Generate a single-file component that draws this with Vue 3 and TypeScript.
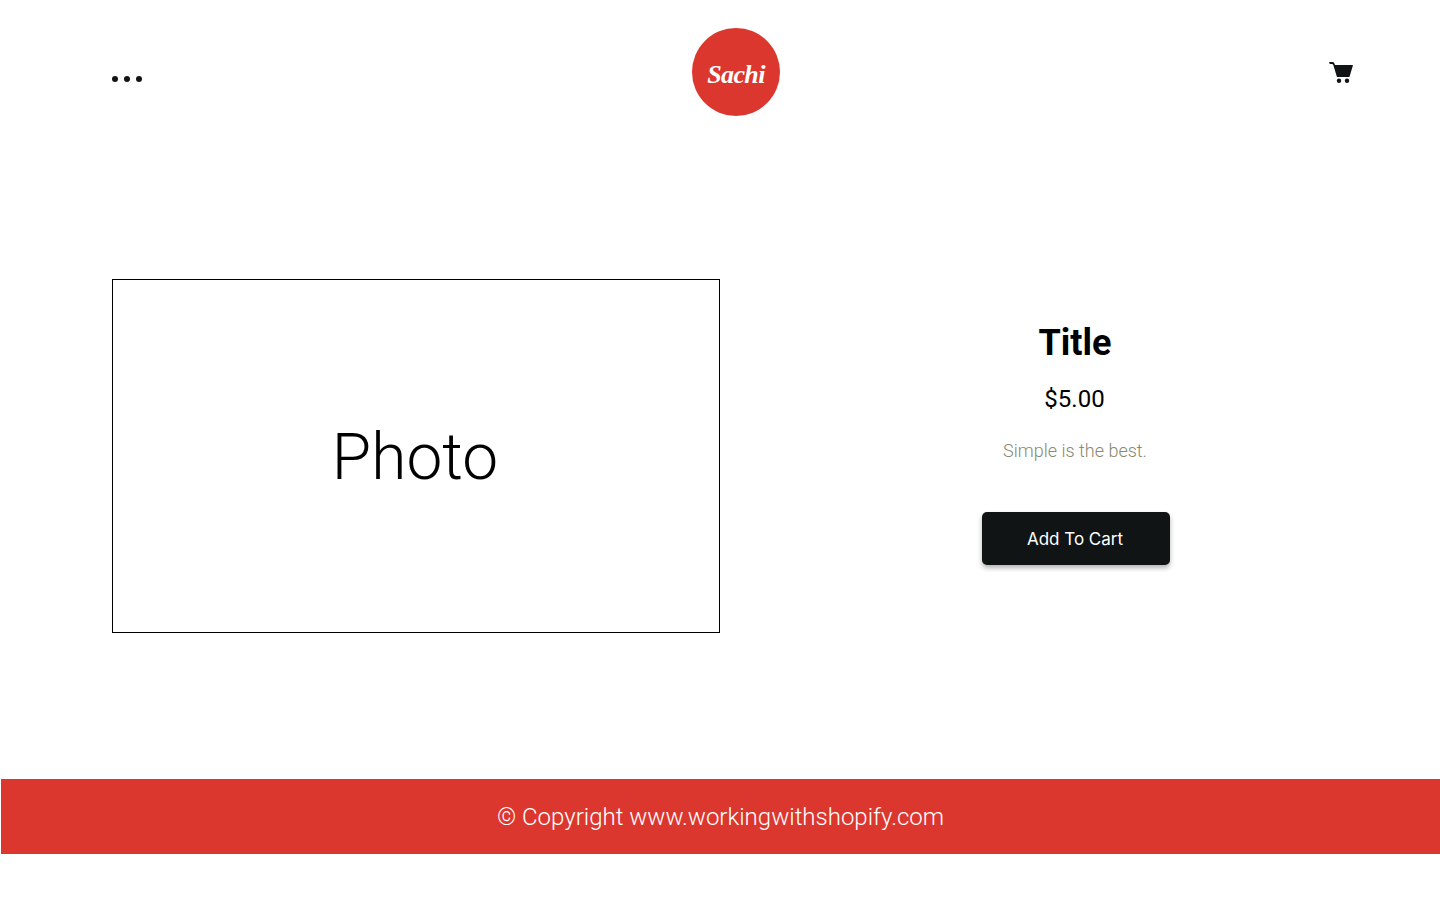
<script setup lang="ts">
const product = {
  title: 'Title',
  price: '$5.00',
  description: 'Simple is the best.'
}
</script>

<template>
  <div class="page">
    <header class="header">
      <button class="menu" aria-label="Menu">
        <span class="dot"></span>
        <span class="dot"></span>
        <span class="dot"></span>
      </button>
      <div class="logo"><span>Sachi</span></div>
      <a class="cart" href="#" aria-label="Cart">
        <svg width="24" height="22" viewBox="0 0 24 22">
          <path d="M0 1h3.6c.8 0 1.3.4 1.6 1.1L6 4h17.6c.3 0 .4.2.3.5l-3.3 10.9c-.1.4-.4.6-.8.6H8.6c-.4 0-.7-.2-.8-.6L4.3 4.1C4 3.2 3.5 2.9 2.8 2.9H.8z" fill="#111414" />
          <circle cx="10" cy="19.7" r="2.2" fill="#111414" />
          <circle cx="18" cy="19.7" r="2.2" fill="#111414" />
        </svg>
      </a>
    </header>

    <main class="product">
      <div class="photo">Photo</div>
      <section class="info">
        <h1 class="title">{{ product.title }}</h1>
        <p class="price">{{ product.price }}</p>
        <p class="description">{{ product.description }}</p>
        <button class="add">Add To Cart</button>
      </section>
    </main>

    <footer class="footer">© Copyright www.workingwithshopify.com</footer>
  </div>
</template>

<style>
html,
body {
  margin: 0;
  background: #ffffff;
}
</style>

<style scoped>
.page {
  height: 900px;
  overflow: hidden;
  font-family: Roboto, "Liberation Sans", sans-serif;
  color: #000000;
}

.header {
  display: grid;
  grid-template-columns: 580px 88px 1fr;
  padding: 28px 87px 0 112px;
  height: 88px;
}

.menu {
  display: flex;
  gap: 6px;
  align-self: start;
  margin-top: 48px;
  padding: 0;
  width: 32px;
  border: none;
  background: transparent;
}

.dot {
  width: 6px;
  height: 6px;
  border-radius: 50%;
  background: #111414;
}

.logo {
  width: 88px;
  height: 88px;
  border-radius: 50%;
  background: #dc372f;
  display: flex;
  align-items: center;
  justify-content: center;
  color: #ffffff;
  font-family: "Liberation Serif", serif;
  font-style: italic;
  font-weight: 700;
  font-size: 26px;
  letter-spacing: -0.6px;
}

.logo span {
  margin-top: 5px;
}

.cart {
  justify-self: end;
  margin-top: 33px;
  height: 24px;
}

.product {
  display: grid;
  grid-template-columns: 608px 710px;
  margin-top: 163px;
  padding-left: 112px;
}

.photo {
  box-sizing: border-box;
  height: 354px;
  padding: 2px 2px 0 0;
  border: 1px solid #000000;
  display: flex;
  align-items: center;
  justify-content: center;
  font-weight: 300;
  font-size: 64px;
}

.info {
  display: flex;
  flex-direction: column;
  align-items: center;
  padding-top: 43px;
}

.title {
  margin: 0;
  font-size: 36px;
  line-height: 42px;
  font-weight: 700;
}

.price {
  margin: 21px 1px 0 0;
  font-size: 24px;
  line-height: 28px;
}

.description {
  margin: 27px 0 0;
  font-size: 18px;
  line-height: 21px;
  font-weight: 300;
  color: #88896f;
}

.add {
  margin: 51px 0 0 2px;
  width: 188px;
  height: 53px;
  padding: 0 2px 0 0;
  border: none;
  border-radius: 5px;
  background: #111414;
  color: #ffffff;
  font-family: Inter, Roboto, sans-serif;
  font-size: 17px;
  box-shadow: 0 3px 5px rgba(0, 0, 0, 0.3);
}

.footer {
  margin: 146px 0 0 1px;
  height: 75px;
  display: flex;
  align-items: center;
  justify-content: center;
  background: #dc372f;
  color: #ffffff;
  font-weight: 300;
  font-size: 24px;
}
</style>
